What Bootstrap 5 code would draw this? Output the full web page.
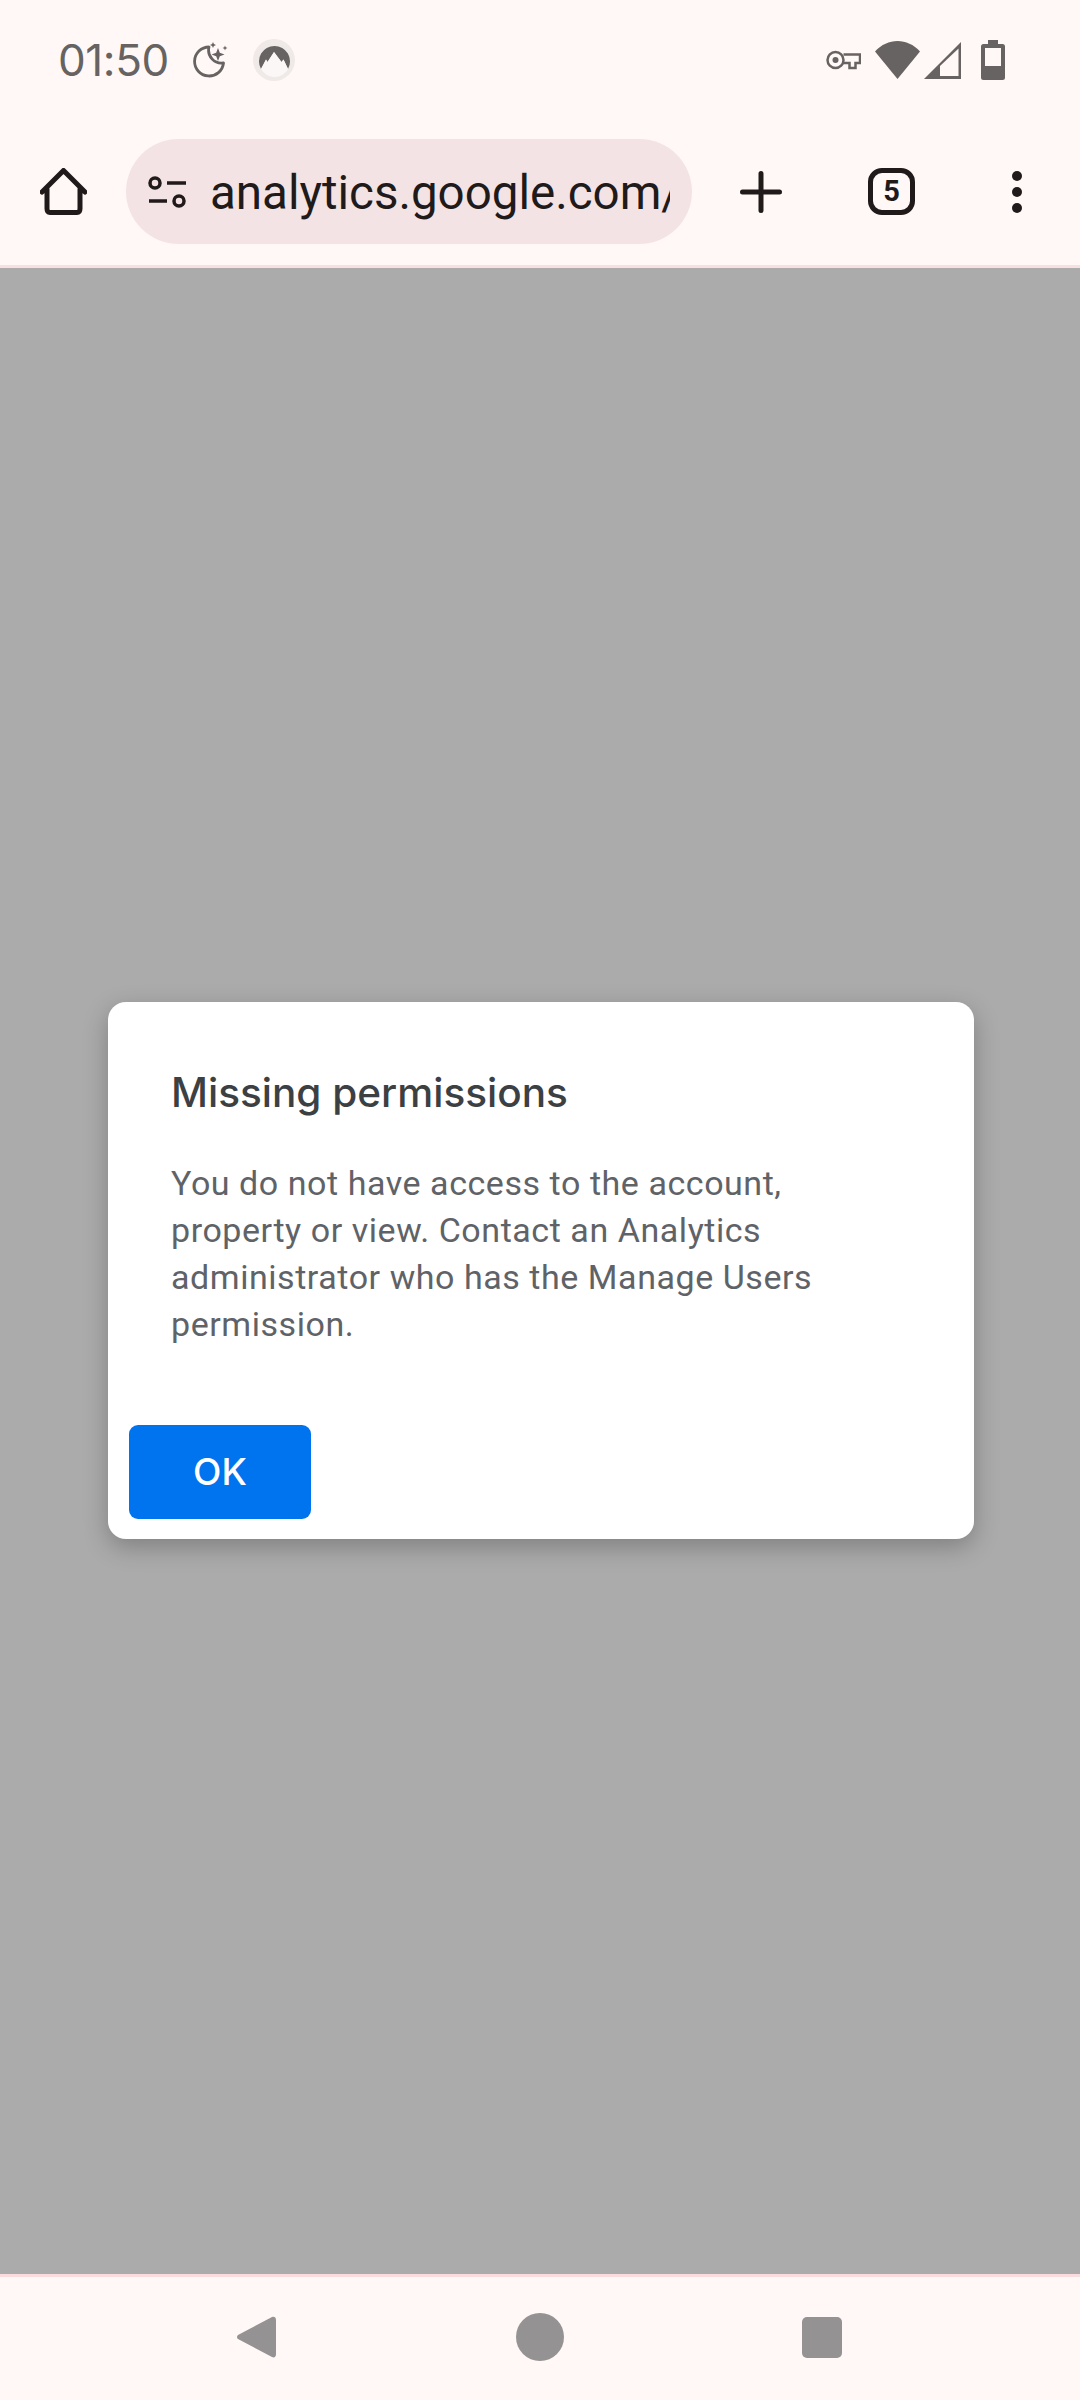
<!DOCTYPE html>
<html lang="en">
<head>
    <meta charset="UTF-8">
    <meta name="viewport" content="width=device-width, initial-scale=1.0">
    <title>Missing permissions</title>
    <link href="https://cdn.jsdelivr.net/npm/bootstrap@5.3.0/dist/css/bootstrap.min.css" rel="stylesheet">
    <style>
        body {
            width: 1080px;
            height: 2400px;
            overflow: hidden;
            background-color: #fff8f6;
            font-family: Roboto, "Liberation Sans", sans-serif;
        }
        .screen { height: 2400px; }
        .status-row { height: 118px; padding: 2px 75px 0 58px; color: #666362; }
        .clock { font-family: Inter, Roboto, sans-serif; font-size: 44px; line-height: 1; letter-spacing: -0.4px; width: 135px; }
        .vpn-badge { margin-left: 24px; }
        .wifi-icon { margin-left: 14px; }
        .signal-icon { margin-left: 4px; }
        .battery-icon { margin-left: 20px; }
        .toolbar { height: 147px; padding-left: 40px; border-bottom: 3px solid #f8dfe0; box-sizing: content-box; }
        .omnibox {
            width: 566px;
            height: 105px;
            margin-left: 39px;
            padding: 0 22px;
            background-color: #f4e3e4;
            color: #201a1b;
        }
        .url-text { font-size: 47.5px; margin-left: 23px; padding-top: 2px; white-space: nowrap; overflow: hidden; flex: 1; line-height: 60px; }
        .plus-icon { margin-left: 48px; }
        .more-icon { margin-left: 97px; }
        .tab-count {
            width: 47px;
            height: 47px;
            margin-left: 86px;
            border: 5px solid #201a1b;
            border-radius: 14px;
            font: 700 29px/1 "Liberation Sans Narrow", Roboto, sans-serif;
            color: #201a1b;
        }
        .page-dim { background-color: #ababab; padding-bottom: 2px; }
        .dialog-box {
            width: 866px;
            height: 537px;
            margin-left: 108px;
            border: 0;
            border-radius: 18px;
            box-shadow: 0 8px 24px rgba(0, 0, 0, 0.25);
        }
        .dialog-title { font-family: Inter, Roboto, sans-serif; font-size: 40.5px; font-weight: 500; line-height: 50px; color: #3c4043; margin: 66px 63px 0; }
        .dialog-text { font-size: 34px; line-height: 47px; letter-spacing: 0.55px; color: #5f6368; margin: 42px 63px 0 63px; }
        .ok-btn {
            width: 182px;
            height: 94px;
            margin: auto 0 20px 21px;
            background-color: #0073ee;
            border: 0;
            border-radius: 9px;
            font-family: Inter, Roboto, sans-serif;
            font-size: 37px;
            font-weight: 500;
            color: #fff;
        }
        .nav-row { height: 126px; border-top: 3px solid #fbdcde; position: relative; }
        .nav-row svg { position: absolute; }
        .nav-back { left: 234px; top: 37px; }
        .nav-home { left: 516px; top: 36px; }
        .nav-recent { left: 802px; top: 40px; }
    </style>
</head>
<body>
<div class="screen d-flex flex-column">

    <!-- status bar -->
    <div class="status-row d-flex align-items-center">
        <span class="clock">01:50</span>
        <svg width="36" height="36" viewBox="0 0 36 36" fill="none">
            <path d="M16 5A14.5 14.500 0 1 0 30.500 21A13 13 0 0 1 16 5Z" stroke="#666362" stroke-width="2.800" stroke-linejoin="round"/>
            <path d="M25 6l1.800 4.700 4.700 1.800-4.700 1.800L25 19l-1.800-4.700-4.700-1.800 4.700-1.800Z" fill="#666362"/>
            <path d="M20 0l.9 2.100 2.100.9-2.100.9-.9 2.100-.9-2.100-2.100-.9 2.100-.9ZM32 3.500l.7 1.800 1.800.7-1.800.7-.7 1.800-.7-1.800-1.800-.7 1.800-.7Z" fill="#666362"/>
        </svg>
        <svg class="vpn-badge" width="42" height="42" viewBox="0 0 42 42">
            <circle cx="21" cy="21" r="21" fill="#efe9e8"/>
            <path d="M8 30A15.500 15.500 0 1 1 35 30L30.500 20.500 28.500 23 21 13 14.500 23 13 20.500Z" fill="#666362"/>
            <path d="M8 30L13 20.500 14.500 23 21 13 28.500 23 30.500 20.500 35 30A15.500 15.500 0 0 1 8 30Z" fill="#fbf7f6"/>
        </svg>
        <div class="d-flex align-items-center ms-auto">
            <svg width="35" height="20" viewBox="0 0 35 20" fill="none">
                <circle cx="9.500" cy="10" r="8" stroke="#666362" stroke-width="2.500"/>
                <circle cx="9.500" cy="10" r="3" fill="#666362"/>
                <path d="M17.500 4.500H34V13H29.500V18H23.500V13H17.500" stroke="#666362" stroke-width="2.500"/>
            </svg>
            <svg class="wifi-icon" width="45" height="38" viewBox="0 0 45 38">
                <path d="M0 10.500C12.500 -3.500 32.500 -3.500 45 10.500L22.500 38Z" fill="#666362"/>
            </svg>
            <svg class="signal-icon" width="37" height="38" viewBox="0 0 37 38">
                <path d="M37 1V38H0Z" fill="#666362"/>
                <path d="M16 35V25L34.500 7.500V35Z" fill="#fff8f6"/>
            </svg>
            <svg class="battery-icon" width="24" height="40" viewBox="0 0 24 40">
                <path d="M7 0H17V4H21.500A2.500 2.500 0 0 1 24 6.500V37.500A2.500 2.500 0 0 1 21.500 40H2.500A2.500 2.500 0 0 1 0 37.500V6.500A2.500 2.500 0 0 1 2.500 4H7Z" fill="#666362"/>
                <rect x="4" y="8" width="16" height="18" fill="#fff8f6"/>
            </svg>
        </div>
    </div>

    <!-- browser toolbar -->
    <div class="toolbar d-flex align-items-center">
        <svg width="47" height="47" viewBox="0 0 47 47" fill="none">
            <path d="M2 24L23.500 2.500 45 24M7 21V40.500C7 43 8 44.500 10 44.500H37C39 44.500 40 43 40 40.500V21" stroke="#201a1b" stroke-width="5" stroke-linecap="round" stroke-linejoin="round"/>
        </svg>
        <div class="omnibox d-flex align-items-center rounded-pill">
            <svg class="flex-shrink-0" width="39" height="32" viewBox="0 0 39 32" fill="none">
                <circle cx="7" cy="7" r="5" stroke="#201a1b" stroke-width="3.500"/>
                <path d="M19 7H38M1 25H19" stroke="#201a1b" stroke-width="3.500"/>
                <circle cx="31" cy="25" r="5" stroke="#201a1b" stroke-width="3.500"/>
            </svg>
            <span class="url-text">analytics.google.com/</span>
        </div>
        <svg class="plus-icon" width="42" height="42" viewBox="0 0 42 42" fill="none">
            <path d="M21 2.500V39.500M2.500 21H39.500" stroke="#201a1b" stroke-width="5" stroke-linecap="round"/>
        </svg>
        <div class="tab-count d-flex align-items-center justify-content-center">5</div>
        <svg class="more-icon" width="10" height="42" viewBox="0 0 10 42" fill="#201a1b">
            <circle cx="5" cy="5" r="5"/>
            <circle cx="5" cy="21" r="5"/>
            <circle cx="5" cy="37" r="5"/>
        </svg>
    </div>

    <!-- dimmed page with the dialog -->
    <div class="page-dim flex-grow-1 d-flex align-items-center">
        <div class="card dialog-box">
            <div class="dialog-title">Missing permissions</div>
            <p class="dialog-text mb-0">You do not have access to the account, property or view. Contact an Analytics administrator who has the Manage Users permission.</p>
            <button type="button" class="btn ok-btn">OK</button>
        </div>
    </div>

    <!-- android nav bar -->
    <div class="nav-row flex-shrink-0">
        <svg class="nav-back" width="44" height="46" viewBox="0 0 44 46">
            <path d="M38 3L4 21a2.500 2.500 0 0 0 0 4L38 43c2 1 4 0 4-3V6c0-3-2-4-4-3Z" fill="#949292"/>
        </svg>
        <svg class="nav-home" width="48" height="48" viewBox="0 0 48 48">
            <circle cx="24" cy="24" r="24" fill="#949292"/>
        </svg>
        <svg class="nav-recent" width="40" height="41" viewBox="0 0 40 41">
            <rect width="40" height="41" rx="5" fill="#949292"/>
        </svg>
    </div>
</div>
<script src="https://cdn.jsdelivr.net/npm/bootstrap@5.3.0/dist/js/bootstrap.bundle.min.js"></script>
</body>
</html>
